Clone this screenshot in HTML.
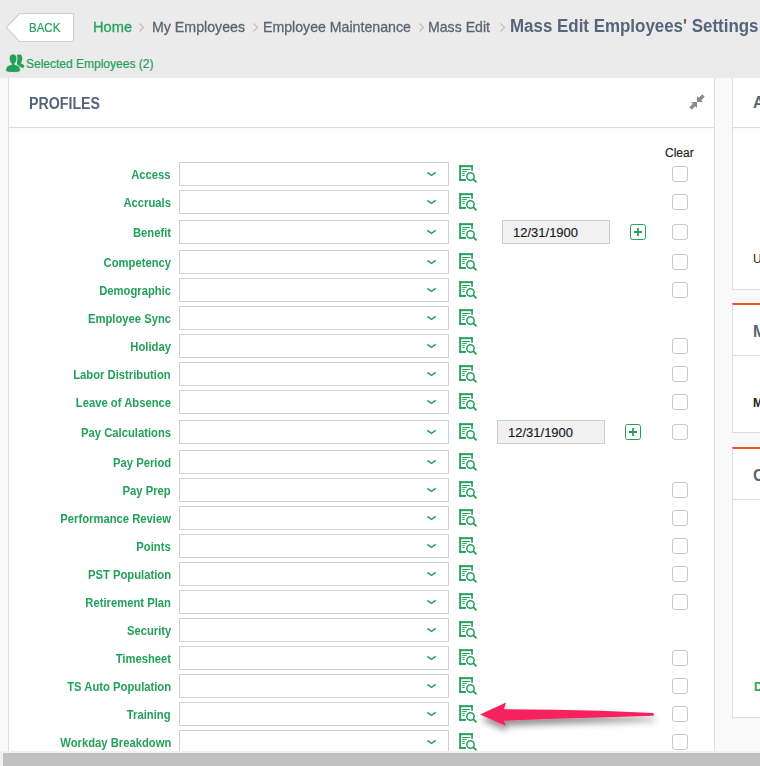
<!DOCTYPE html><html><head><meta charset="utf-8"><style>
*{box-sizing:border-box;margin:0;padding:0}
html,body{width:760px;height:766px;overflow:hidden;background:#f9f9f9;font-family:"Liberation Sans",sans-serif;position:relative}
.a{position:absolute}
#hdr{left:0;top:0;width:760px;height:78px;background:#ebebeb}
.bc{font-size:15px;color:#5b6470;white-space:nowrap;top:18px;-webkit-text-stroke:0.3px currentColor;transform-origin:0 0}
.sep{font-size:13px;color:#aaa}
.lbl{font-size:13px;font-weight:bold;color:#23a15a;white-space:nowrap;transform-origin:100% 0;text-align:right}
.sel{left:179px;width:270px;height:24px;border:1px solid #cfcfcf;background:#fff}
.ic{left:459px;width:19px;height:19px}
.cb{left:672px;width:16px;height:16px;border:1px solid #c8c8c8;border-radius:3px;background:#fff}
.dt{width:108px;height:24px;border:1px solid #cdcdcd;background:#f1f1f1;font-size:13px;color:#1a1a1a;-webkit-text-stroke:0.15px currentColor;padding-left:10px;line-height:24px}
.pl{width:16px;height:16px;border:1px solid #23a15a;border-radius:2px;background:#fff}
</style></head><body><div id="hdr" class="a"></div>
<svg class="a" style="left:0;top:0" width="80" height="50"><path d="M19.5 13.5 L73.5 13.5 L73.5 41.5 L19.5 41.5 L6.3 27.5 Z" fill="#fff" stroke="#d0d0d0" stroke-width="1.1"/></svg>
<div class="a" style="left:29px;top:21px;font-size:12.5px;-webkit-text-stroke:0.2px currentColor;color:#23a15a;white-space:nowrap;transform:scaleX(0.92);transform-origin:0 0">BACK</div>
<div class="a bc" style="left:93px;color:#23a15a;transform:scaleX(0.978)">Home</div>
<div class="a bc" style="left:152px;transform:scaleX(0.946)">My Employees</div>
<div class="a bc" style="left:263px;transform:scaleX(0.943)">Employee Maintenance</div>
<div class="a bc" style="left:428px;transform:scaleX(0.941)">Mass Edit</div>
<svg class="a" style="left:138px;top:22px" width="8" height="12"><path d="M1.5 1.5 L5.5 5.5 L1.5 9.5" fill="none" stroke="#bdbdbd" stroke-width="1.2"/></svg>
<svg class="a" style="left:252px;top:22px" width="8" height="12"><path d="M1.5 1.5 L5.5 5.5 L1.5 9.5" fill="none" stroke="#bdbdbd" stroke-width="1.2"/></svg>
<svg class="a" style="left:418px;top:22px" width="8" height="12"><path d="M1.5 1.5 L5.5 5.5 L1.5 9.5" fill="none" stroke="#bdbdbd" stroke-width="1.2"/></svg>
<svg class="a" style="left:499px;top:22px" width="8" height="12"><path d="M1.5 1.5 L5.5 5.5 L1.5 9.5" fill="none" stroke="#bdbdbd" stroke-width="1.2"/></svg>
<div class="a" style="left:510px;top:16px;font-size:18px;font-weight:bold;color:#56657a;white-space:nowrap;transform:scaleX(0.94);transform-origin:0 0">Mass Edit Employees' Settings</div>
<svg class="a" style="left:0;top:50px" width="30" height="26" viewBox="0 50 30 26"><g fill="#23a15a"><path d="M19.8 54.6 C21.4 54.6 22.3 56 22.3 58.3 C22.3 60.6 21.5 62.3 20.8 63.2 C23 64.2 24.5 65.3 24.4 66.6 C24.3 67.7 23.4 68 22.3 67.8 L17 66 L17 55 C17.8 54.7 18.7 54.6 19.8 54.6 Z"/></g><g fill="#23a15a" stroke="#ebebeb" stroke-width="1"><path d="M13.1 53.9 C15.5 53.9 17 55.6 17 58.3 C17 60.8 15.9 62.6 14.7 63.7 L14.7 64.5 C18.2 64.9 20.5 66.8 20.4 70.2 C20.3 72.2 17.5 72.5 13 72.5 C8.5 72.5 5.8 72.2 5.7 70.2 C5.6 66.8 8 64.9 11.5 64.5 L11.5 63.7 C10.3 62.6 9.2 60.8 9.2 58.3 C9.2 55.6 10.7 53.9 13.1 53.9 Z"/></g></svg>
<div class="a" style="left:26px;top:57px;font-size:12px;-webkit-text-stroke:0.2px currentColor;color:#23a15a;white-space:nowrap;transform:scaleX(1.0);transform-origin:0 0">Selected Employees (2)</div>
<div class="a" style="left:8px;top:78px;width:707px;height:673px;background:#fff;border-left:1px solid #dedede;border-right:1px solid #dedede"></div>
<div class="a" style="left:9px;top:127px;width:705px;height:1px;background:#dcdcdc;box-shadow:0 2px 3px rgba(0,0,0,0.07)"></div>
<div class="a" style="left:29px;top:95px;font-size:16px;font-weight:bold;color:#56657a;white-space:nowrap;transform:scaleX(0.888);transform-origin:0 0">PROFILES</div>
<svg class="a" style="left:680px;top:85px" width="34" height="34" viewBox="680 85 34 34"><g fill="#8c8c8c"><path d="M697 96 L698.8 97.8 L702.3 94.3 L704.7 96.7 L701.2 100.2 L703 102 L697 102 Z"/><path d="M697 108 L695.2 106.2 L691.7 109.7 L689.3 107.3 L692.8 103.8 L691 102 L697 102 Z"/></g></svg>
<div class="a" style="left:665px;top:146px;font-size:12px;color:#222;-webkit-text-stroke:0.15px currentColor;white-space:nowrap;transform:scaleX(1.0);transform-origin:0 0">Clear</div>
<div class="a lbl" style="right:589px;top:167px;transform:scaleX(0.865)">Access</div>
<div class="a sel" style="top:162px"></div>
<svg class="a" style="left:426px;top:171px" width="11" height="7"><path d="M1.3 1.3 L5.5 4.3 L9.7 1.3" fill="none" stroke="#23a15a" stroke-width="1.45"/></svg>
<div class="a ic" style="top:165px"><svg viewBox="0 0 19 19" width="19" height="19"><g fill="#23a15a"><rect x="0.2" y="0.2" width="1.9" height="15.7"/><rect x="0.2" y="0.2" width="13.7" height="2"/><rect x="12.2" y="0.2" width="1.7" height="5.6"/><rect x="0.2" y="14" width="6.8" height="1.9"/><rect x="3.2" y="4" width="7.7" height="1"/><rect x="3.2" y="5.9" width="4.5" height="1"/><rect x="3.2" y="7.9" width="2.6" height="1"/><rect x="3.2" y="9.9" width="2.6" height="1"/></g><circle cx="11.5" cy="11.5" r="3.7" fill="none" stroke="#23a15a" stroke-width="1.5"/><path d="M14.2 14.2 L17.5 17.4" stroke="#23a15a" stroke-width="1.8"/></svg></div>
<div class="a cb" style="top:166px"></div>
<div class="a lbl" style="right:589px;top:195px;transform:scaleX(0.865)">Accruals</div>
<div class="a sel" style="top:190px"></div>
<svg class="a" style="left:426px;top:199px" width="11" height="7"><path d="M1.3 1.3 L5.5 4.3 L9.7 1.3" fill="none" stroke="#23a15a" stroke-width="1.45"/></svg>
<div class="a ic" style="top:193px"><svg viewBox="0 0 19 19" width="19" height="19"><g fill="#23a15a"><rect x="0.2" y="0.2" width="1.9" height="15.7"/><rect x="0.2" y="0.2" width="13.7" height="2"/><rect x="12.2" y="0.2" width="1.7" height="5.6"/><rect x="0.2" y="14" width="6.8" height="1.9"/><rect x="3.2" y="4" width="7.7" height="1"/><rect x="3.2" y="5.9" width="4.5" height="1"/><rect x="3.2" y="7.9" width="2.6" height="1"/><rect x="3.2" y="9.9" width="2.6" height="1"/></g><circle cx="11.5" cy="11.5" r="3.7" fill="none" stroke="#23a15a" stroke-width="1.5"/><path d="M14.2 14.2 L17.5 17.4" stroke="#23a15a" stroke-width="1.8"/></svg></div>
<div class="a cb" style="top:194px"></div>
<div class="a lbl" style="right:589px;top:225px;transform:scaleX(0.865)">Benefit</div>
<div class="a sel" style="top:220px"></div>
<svg class="a" style="left:426px;top:229px" width="11" height="7"><path d="M1.3 1.3 L5.5 4.3 L9.7 1.3" fill="none" stroke="#23a15a" stroke-width="1.45"/></svg>
<div class="a ic" style="top:223px"><svg viewBox="0 0 19 19" width="19" height="19"><g fill="#23a15a"><rect x="0.2" y="0.2" width="1.9" height="15.7"/><rect x="0.2" y="0.2" width="13.7" height="2"/><rect x="12.2" y="0.2" width="1.7" height="5.6"/><rect x="0.2" y="14" width="6.8" height="1.9"/><rect x="3.2" y="4" width="7.7" height="1"/><rect x="3.2" y="5.9" width="4.5" height="1"/><rect x="3.2" y="7.9" width="2.6" height="1"/><rect x="3.2" y="9.9" width="2.6" height="1"/></g><circle cx="11.5" cy="11.5" r="3.7" fill="none" stroke="#23a15a" stroke-width="1.5"/><path d="M14.2 14.2 L17.5 17.4" stroke="#23a15a" stroke-width="1.8"/></svg></div>
<div class="a cb" style="top:224px"></div>
<div class="a dt" style="left:502px;top:220px">12/31/1900</div>
<svg class="a" style="left:630px;top:224px" width="16" height="16"><rect x="0.5" y="0.5" width="15" height="15" rx="2" fill="#fff" stroke="#23a15a"/><path d="M8 4 V12 M4 8 H12" stroke="#23a15a" stroke-width="1.8"/></svg>
<div class="a lbl" style="right:589px;top:255px;transform:scaleX(0.865)">Competency</div>
<div class="a sel" style="top:250px"></div>
<svg class="a" style="left:426px;top:259px" width="11" height="7"><path d="M1.3 1.3 L5.5 4.3 L9.7 1.3" fill="none" stroke="#23a15a" stroke-width="1.45"/></svg>
<div class="a ic" style="top:253px"><svg viewBox="0 0 19 19" width="19" height="19"><g fill="#23a15a"><rect x="0.2" y="0.2" width="1.9" height="15.7"/><rect x="0.2" y="0.2" width="13.7" height="2"/><rect x="12.2" y="0.2" width="1.7" height="5.6"/><rect x="0.2" y="14" width="6.8" height="1.9"/><rect x="3.2" y="4" width="7.7" height="1"/><rect x="3.2" y="5.9" width="4.5" height="1"/><rect x="3.2" y="7.9" width="2.6" height="1"/><rect x="3.2" y="9.9" width="2.6" height="1"/></g><circle cx="11.5" cy="11.5" r="3.7" fill="none" stroke="#23a15a" stroke-width="1.5"/><path d="M14.2 14.2 L17.5 17.4" stroke="#23a15a" stroke-width="1.8"/></svg></div>
<div class="a cb" style="top:254px"></div>
<div class="a lbl" style="right:589px;top:283px;transform:scaleX(0.865)">Demographic</div>
<div class="a sel" style="top:278px"></div>
<svg class="a" style="left:426px;top:287px" width="11" height="7"><path d="M1.3 1.3 L5.5 4.3 L9.7 1.3" fill="none" stroke="#23a15a" stroke-width="1.45"/></svg>
<div class="a ic" style="top:281px"><svg viewBox="0 0 19 19" width="19" height="19"><g fill="#23a15a"><rect x="0.2" y="0.2" width="1.9" height="15.7"/><rect x="0.2" y="0.2" width="13.7" height="2"/><rect x="12.2" y="0.2" width="1.7" height="5.6"/><rect x="0.2" y="14" width="6.8" height="1.9"/><rect x="3.2" y="4" width="7.7" height="1"/><rect x="3.2" y="5.9" width="4.5" height="1"/><rect x="3.2" y="7.9" width="2.6" height="1"/><rect x="3.2" y="9.9" width="2.6" height="1"/></g><circle cx="11.5" cy="11.5" r="3.7" fill="none" stroke="#23a15a" stroke-width="1.5"/><path d="M14.2 14.2 L17.5 17.4" stroke="#23a15a" stroke-width="1.8"/></svg></div>
<div class="a cb" style="top:282px"></div>
<div class="a lbl" style="right:589px;top:311px;transform:scaleX(0.865)">Employee Sync</div>
<div class="a sel" style="top:306px"></div>
<svg class="a" style="left:426px;top:315px" width="11" height="7"><path d="M1.3 1.3 L5.5 4.3 L9.7 1.3" fill="none" stroke="#23a15a" stroke-width="1.45"/></svg>
<div class="a ic" style="top:309px"><svg viewBox="0 0 19 19" width="19" height="19"><g fill="#23a15a"><rect x="0.2" y="0.2" width="1.9" height="15.7"/><rect x="0.2" y="0.2" width="13.7" height="2"/><rect x="12.2" y="0.2" width="1.7" height="5.6"/><rect x="0.2" y="14" width="6.8" height="1.9"/><rect x="3.2" y="4" width="7.7" height="1"/><rect x="3.2" y="5.9" width="4.5" height="1"/><rect x="3.2" y="7.9" width="2.6" height="1"/><rect x="3.2" y="9.9" width="2.6" height="1"/></g><circle cx="11.5" cy="11.5" r="3.7" fill="none" stroke="#23a15a" stroke-width="1.5"/><path d="M14.2 14.2 L17.5 17.4" stroke="#23a15a" stroke-width="1.8"/></svg></div>
<div class="a lbl" style="right:589px;top:339px;transform:scaleX(0.865)">Holiday</div>
<div class="a sel" style="top:334px"></div>
<svg class="a" style="left:426px;top:343px" width="11" height="7"><path d="M1.3 1.3 L5.5 4.3 L9.7 1.3" fill="none" stroke="#23a15a" stroke-width="1.45"/></svg>
<div class="a ic" style="top:337px"><svg viewBox="0 0 19 19" width="19" height="19"><g fill="#23a15a"><rect x="0.2" y="0.2" width="1.9" height="15.7"/><rect x="0.2" y="0.2" width="13.7" height="2"/><rect x="12.2" y="0.2" width="1.7" height="5.6"/><rect x="0.2" y="14" width="6.8" height="1.9"/><rect x="3.2" y="4" width="7.7" height="1"/><rect x="3.2" y="5.9" width="4.5" height="1"/><rect x="3.2" y="7.9" width="2.6" height="1"/><rect x="3.2" y="9.9" width="2.6" height="1"/></g><circle cx="11.5" cy="11.5" r="3.7" fill="none" stroke="#23a15a" stroke-width="1.5"/><path d="M14.2 14.2 L17.5 17.4" stroke="#23a15a" stroke-width="1.8"/></svg></div>
<div class="a cb" style="top:338px"></div>
<div class="a lbl" style="right:589px;top:367px;transform:scaleX(0.865)">Labor Distribution</div>
<div class="a sel" style="top:362px"></div>
<svg class="a" style="left:426px;top:371px" width="11" height="7"><path d="M1.3 1.3 L5.5 4.3 L9.7 1.3" fill="none" stroke="#23a15a" stroke-width="1.45"/></svg>
<div class="a ic" style="top:365px"><svg viewBox="0 0 19 19" width="19" height="19"><g fill="#23a15a"><rect x="0.2" y="0.2" width="1.9" height="15.7"/><rect x="0.2" y="0.2" width="13.7" height="2"/><rect x="12.2" y="0.2" width="1.7" height="5.6"/><rect x="0.2" y="14" width="6.8" height="1.9"/><rect x="3.2" y="4" width="7.7" height="1"/><rect x="3.2" y="5.9" width="4.5" height="1"/><rect x="3.2" y="7.9" width="2.6" height="1"/><rect x="3.2" y="9.9" width="2.6" height="1"/></g><circle cx="11.5" cy="11.5" r="3.7" fill="none" stroke="#23a15a" stroke-width="1.5"/><path d="M14.2 14.2 L17.5 17.4" stroke="#23a15a" stroke-width="1.8"/></svg></div>
<div class="a cb" style="top:366px"></div>
<div class="a lbl" style="right:589px;top:395px;transform:scaleX(0.865)">Leave of Absence</div>
<div class="a sel" style="top:390px"></div>
<svg class="a" style="left:426px;top:399px" width="11" height="7"><path d="M1.3 1.3 L5.5 4.3 L9.7 1.3" fill="none" stroke="#23a15a" stroke-width="1.45"/></svg>
<div class="a ic" style="top:393px"><svg viewBox="0 0 19 19" width="19" height="19"><g fill="#23a15a"><rect x="0.2" y="0.2" width="1.9" height="15.7"/><rect x="0.2" y="0.2" width="13.7" height="2"/><rect x="12.2" y="0.2" width="1.7" height="5.6"/><rect x="0.2" y="14" width="6.8" height="1.9"/><rect x="3.2" y="4" width="7.7" height="1"/><rect x="3.2" y="5.9" width="4.5" height="1"/><rect x="3.2" y="7.9" width="2.6" height="1"/><rect x="3.2" y="9.9" width="2.6" height="1"/></g><circle cx="11.5" cy="11.5" r="3.7" fill="none" stroke="#23a15a" stroke-width="1.5"/><path d="M14.2 14.2 L17.5 17.4" stroke="#23a15a" stroke-width="1.8"/></svg></div>
<div class="a cb" style="top:394px"></div>
<div class="a lbl" style="right:589px;top:425px;transform:scaleX(0.865)">Pay Calculations</div>
<div class="a sel" style="top:420px"></div>
<svg class="a" style="left:426px;top:429px" width="11" height="7"><path d="M1.3 1.3 L5.5 4.3 L9.7 1.3" fill="none" stroke="#23a15a" stroke-width="1.45"/></svg>
<div class="a ic" style="top:423px"><svg viewBox="0 0 19 19" width="19" height="19"><g fill="#23a15a"><rect x="0.2" y="0.2" width="1.9" height="15.7"/><rect x="0.2" y="0.2" width="13.7" height="2"/><rect x="12.2" y="0.2" width="1.7" height="5.6"/><rect x="0.2" y="14" width="6.8" height="1.9"/><rect x="3.2" y="4" width="7.7" height="1"/><rect x="3.2" y="5.9" width="4.5" height="1"/><rect x="3.2" y="7.9" width="2.6" height="1"/><rect x="3.2" y="9.9" width="2.6" height="1"/></g><circle cx="11.5" cy="11.5" r="3.7" fill="none" stroke="#23a15a" stroke-width="1.5"/><path d="M14.2 14.2 L17.5 17.4" stroke="#23a15a" stroke-width="1.8"/></svg></div>
<div class="a cb" style="top:424px"></div>
<div class="a dt" style="left:497px;top:420px">12/31/1900</div>
<svg class="a" style="left:625px;top:424px" width="16" height="16"><rect x="0.5" y="0.5" width="15" height="15" rx="2" fill="#fff" stroke="#23a15a"/><path d="M8 4 V12 M4 8 H12" stroke="#23a15a" stroke-width="1.8"/></svg>
<div class="a lbl" style="right:589px;top:455px;transform:scaleX(0.865)">Pay Period</div>
<div class="a sel" style="top:450px"></div>
<svg class="a" style="left:426px;top:459px" width="11" height="7"><path d="M1.3 1.3 L5.5 4.3 L9.7 1.3" fill="none" stroke="#23a15a" stroke-width="1.45"/></svg>
<div class="a ic" style="top:453px"><svg viewBox="0 0 19 19" width="19" height="19"><g fill="#23a15a"><rect x="0.2" y="0.2" width="1.9" height="15.7"/><rect x="0.2" y="0.2" width="13.7" height="2"/><rect x="12.2" y="0.2" width="1.7" height="5.6"/><rect x="0.2" y="14" width="6.8" height="1.9"/><rect x="3.2" y="4" width="7.7" height="1"/><rect x="3.2" y="5.9" width="4.5" height="1"/><rect x="3.2" y="7.9" width="2.6" height="1"/><rect x="3.2" y="9.9" width="2.6" height="1"/></g><circle cx="11.5" cy="11.5" r="3.7" fill="none" stroke="#23a15a" stroke-width="1.5"/><path d="M14.2 14.2 L17.5 17.4" stroke="#23a15a" stroke-width="1.8"/></svg></div>
<div class="a lbl" style="right:589px;top:483px;transform:scaleX(0.865)">Pay Prep</div>
<div class="a sel" style="top:478px"></div>
<svg class="a" style="left:426px;top:487px" width="11" height="7"><path d="M1.3 1.3 L5.5 4.3 L9.7 1.3" fill="none" stroke="#23a15a" stroke-width="1.45"/></svg>
<div class="a ic" style="top:481px"><svg viewBox="0 0 19 19" width="19" height="19"><g fill="#23a15a"><rect x="0.2" y="0.2" width="1.9" height="15.7"/><rect x="0.2" y="0.2" width="13.7" height="2"/><rect x="12.2" y="0.2" width="1.7" height="5.6"/><rect x="0.2" y="14" width="6.8" height="1.9"/><rect x="3.2" y="4" width="7.7" height="1"/><rect x="3.2" y="5.9" width="4.5" height="1"/><rect x="3.2" y="7.9" width="2.6" height="1"/><rect x="3.2" y="9.9" width="2.6" height="1"/></g><circle cx="11.5" cy="11.5" r="3.7" fill="none" stroke="#23a15a" stroke-width="1.5"/><path d="M14.2 14.2 L17.5 17.4" stroke="#23a15a" stroke-width="1.8"/></svg></div>
<div class="a cb" style="top:482px"></div>
<div class="a lbl" style="right:589px;top:511px;transform:scaleX(0.865)">Performance Review</div>
<div class="a sel" style="top:506px"></div>
<svg class="a" style="left:426px;top:515px" width="11" height="7"><path d="M1.3 1.3 L5.5 4.3 L9.7 1.3" fill="none" stroke="#23a15a" stroke-width="1.45"/></svg>
<div class="a ic" style="top:509px"><svg viewBox="0 0 19 19" width="19" height="19"><g fill="#23a15a"><rect x="0.2" y="0.2" width="1.9" height="15.7"/><rect x="0.2" y="0.2" width="13.7" height="2"/><rect x="12.2" y="0.2" width="1.7" height="5.6"/><rect x="0.2" y="14" width="6.8" height="1.9"/><rect x="3.2" y="4" width="7.7" height="1"/><rect x="3.2" y="5.9" width="4.5" height="1"/><rect x="3.2" y="7.9" width="2.6" height="1"/><rect x="3.2" y="9.9" width="2.6" height="1"/></g><circle cx="11.5" cy="11.5" r="3.7" fill="none" stroke="#23a15a" stroke-width="1.5"/><path d="M14.2 14.2 L17.5 17.4" stroke="#23a15a" stroke-width="1.8"/></svg></div>
<div class="a cb" style="top:510px"></div>
<div class="a lbl" style="right:589px;top:539px;transform:scaleX(0.865)">Points</div>
<div class="a sel" style="top:534px"></div>
<svg class="a" style="left:426px;top:543px" width="11" height="7"><path d="M1.3 1.3 L5.5 4.3 L9.7 1.3" fill="none" stroke="#23a15a" stroke-width="1.45"/></svg>
<div class="a ic" style="top:537px"><svg viewBox="0 0 19 19" width="19" height="19"><g fill="#23a15a"><rect x="0.2" y="0.2" width="1.9" height="15.7"/><rect x="0.2" y="0.2" width="13.7" height="2"/><rect x="12.2" y="0.2" width="1.7" height="5.6"/><rect x="0.2" y="14" width="6.8" height="1.9"/><rect x="3.2" y="4" width="7.7" height="1"/><rect x="3.2" y="5.9" width="4.5" height="1"/><rect x="3.2" y="7.9" width="2.6" height="1"/><rect x="3.2" y="9.9" width="2.6" height="1"/></g><circle cx="11.5" cy="11.5" r="3.7" fill="none" stroke="#23a15a" stroke-width="1.5"/><path d="M14.2 14.2 L17.5 17.4" stroke="#23a15a" stroke-width="1.8"/></svg></div>
<div class="a cb" style="top:538px"></div>
<div class="a lbl" style="right:589px;top:567px;transform:scaleX(0.865)">PST Population</div>
<div class="a sel" style="top:562px"></div>
<svg class="a" style="left:426px;top:571px" width="11" height="7"><path d="M1.3 1.3 L5.5 4.3 L9.7 1.3" fill="none" stroke="#23a15a" stroke-width="1.45"/></svg>
<div class="a ic" style="top:565px"><svg viewBox="0 0 19 19" width="19" height="19"><g fill="#23a15a"><rect x="0.2" y="0.2" width="1.9" height="15.7"/><rect x="0.2" y="0.2" width="13.7" height="2"/><rect x="12.2" y="0.2" width="1.7" height="5.6"/><rect x="0.2" y="14" width="6.8" height="1.9"/><rect x="3.2" y="4" width="7.7" height="1"/><rect x="3.2" y="5.9" width="4.5" height="1"/><rect x="3.2" y="7.9" width="2.6" height="1"/><rect x="3.2" y="9.9" width="2.6" height="1"/></g><circle cx="11.5" cy="11.5" r="3.7" fill="none" stroke="#23a15a" stroke-width="1.5"/><path d="M14.2 14.2 L17.5 17.4" stroke="#23a15a" stroke-width="1.8"/></svg></div>
<div class="a cb" style="top:566px"></div>
<div class="a lbl" style="right:589px;top:595px;transform:scaleX(0.865)">Retirement Plan</div>
<div class="a sel" style="top:590px"></div>
<svg class="a" style="left:426px;top:599px" width="11" height="7"><path d="M1.3 1.3 L5.5 4.3 L9.7 1.3" fill="none" stroke="#23a15a" stroke-width="1.45"/></svg>
<div class="a ic" style="top:593px"><svg viewBox="0 0 19 19" width="19" height="19"><g fill="#23a15a"><rect x="0.2" y="0.2" width="1.9" height="15.7"/><rect x="0.2" y="0.2" width="13.7" height="2"/><rect x="12.2" y="0.2" width="1.7" height="5.6"/><rect x="0.2" y="14" width="6.8" height="1.9"/><rect x="3.2" y="4" width="7.7" height="1"/><rect x="3.2" y="5.9" width="4.5" height="1"/><rect x="3.2" y="7.9" width="2.6" height="1"/><rect x="3.2" y="9.9" width="2.6" height="1"/></g><circle cx="11.5" cy="11.5" r="3.7" fill="none" stroke="#23a15a" stroke-width="1.5"/><path d="M14.2 14.2 L17.5 17.4" stroke="#23a15a" stroke-width="1.8"/></svg></div>
<div class="a cb" style="top:594px"></div>
<div class="a lbl" style="right:589px;top:623px;transform:scaleX(0.865)">Security</div>
<div class="a sel" style="top:618px"></div>
<svg class="a" style="left:426px;top:627px" width="11" height="7"><path d="M1.3 1.3 L5.5 4.3 L9.7 1.3" fill="none" stroke="#23a15a" stroke-width="1.45"/></svg>
<div class="a ic" style="top:621px"><svg viewBox="0 0 19 19" width="19" height="19"><g fill="#23a15a"><rect x="0.2" y="0.2" width="1.9" height="15.7"/><rect x="0.2" y="0.2" width="13.7" height="2"/><rect x="12.2" y="0.2" width="1.7" height="5.6"/><rect x="0.2" y="14" width="6.8" height="1.9"/><rect x="3.2" y="4" width="7.7" height="1"/><rect x="3.2" y="5.9" width="4.5" height="1"/><rect x="3.2" y="7.9" width="2.6" height="1"/><rect x="3.2" y="9.9" width="2.6" height="1"/></g><circle cx="11.5" cy="11.5" r="3.7" fill="none" stroke="#23a15a" stroke-width="1.5"/><path d="M14.2 14.2 L17.5 17.4" stroke="#23a15a" stroke-width="1.8"/></svg></div>
<div class="a lbl" style="right:589px;top:651px;transform:scaleX(0.865)">Timesheet</div>
<div class="a sel" style="top:646px"></div>
<svg class="a" style="left:426px;top:655px" width="11" height="7"><path d="M1.3 1.3 L5.5 4.3 L9.7 1.3" fill="none" stroke="#23a15a" stroke-width="1.45"/></svg>
<div class="a ic" style="top:649px"><svg viewBox="0 0 19 19" width="19" height="19"><g fill="#23a15a"><rect x="0.2" y="0.2" width="1.9" height="15.7"/><rect x="0.2" y="0.2" width="13.7" height="2"/><rect x="12.2" y="0.2" width="1.7" height="5.6"/><rect x="0.2" y="14" width="6.8" height="1.9"/><rect x="3.2" y="4" width="7.7" height="1"/><rect x="3.2" y="5.9" width="4.5" height="1"/><rect x="3.2" y="7.9" width="2.6" height="1"/><rect x="3.2" y="9.9" width="2.6" height="1"/></g><circle cx="11.5" cy="11.5" r="3.7" fill="none" stroke="#23a15a" stroke-width="1.5"/><path d="M14.2 14.2 L17.5 17.4" stroke="#23a15a" stroke-width="1.8"/></svg></div>
<div class="a cb" style="top:650px"></div>
<div class="a lbl" style="right:589px;top:679px;transform:scaleX(0.865)">TS Auto Population</div>
<div class="a sel" style="top:674px"></div>
<svg class="a" style="left:426px;top:683px" width="11" height="7"><path d="M1.3 1.3 L5.5 4.3 L9.7 1.3" fill="none" stroke="#23a15a" stroke-width="1.45"/></svg>
<div class="a ic" style="top:677px"><svg viewBox="0 0 19 19" width="19" height="19"><g fill="#23a15a"><rect x="0.2" y="0.2" width="1.9" height="15.7"/><rect x="0.2" y="0.2" width="13.7" height="2"/><rect x="12.2" y="0.2" width="1.7" height="5.6"/><rect x="0.2" y="14" width="6.8" height="1.9"/><rect x="3.2" y="4" width="7.7" height="1"/><rect x="3.2" y="5.9" width="4.5" height="1"/><rect x="3.2" y="7.9" width="2.6" height="1"/><rect x="3.2" y="9.9" width="2.6" height="1"/></g><circle cx="11.5" cy="11.5" r="3.7" fill="none" stroke="#23a15a" stroke-width="1.5"/><path d="M14.2 14.2 L17.5 17.4" stroke="#23a15a" stroke-width="1.8"/></svg></div>
<div class="a cb" style="top:678px"></div>
<div class="a lbl" style="right:589px;top:707px;transform:scaleX(0.865)">Training</div>
<div class="a sel" style="top:702px"></div>
<svg class="a" style="left:426px;top:711px" width="11" height="7"><path d="M1.3 1.3 L5.5 4.3 L9.7 1.3" fill="none" stroke="#23a15a" stroke-width="1.45"/></svg>
<div class="a ic" style="top:705px"><svg viewBox="0 0 19 19" width="19" height="19"><g fill="#23a15a"><rect x="0.2" y="0.2" width="1.9" height="15.7"/><rect x="0.2" y="0.2" width="13.7" height="2"/><rect x="12.2" y="0.2" width="1.7" height="5.6"/><rect x="0.2" y="14" width="6.8" height="1.9"/><rect x="3.2" y="4" width="7.7" height="1"/><rect x="3.2" y="5.9" width="4.5" height="1"/><rect x="3.2" y="7.9" width="2.6" height="1"/><rect x="3.2" y="9.9" width="2.6" height="1"/></g><circle cx="11.5" cy="11.5" r="3.7" fill="none" stroke="#23a15a" stroke-width="1.5"/><path d="M14.2 14.2 L17.5 17.4" stroke="#23a15a" stroke-width="1.8"/></svg></div>
<div class="a cb" style="top:706px"></div>
<div class="a lbl" style="right:589px;top:735px;transform:scaleX(0.865)">Workday Breakdown</div>
<div class="a sel" style="top:730px"></div>
<svg class="a" style="left:426px;top:739px" width="11" height="7"><path d="M1.3 1.3 L5.5 4.3 L9.7 1.3" fill="none" stroke="#23a15a" stroke-width="1.45"/></svg>
<div class="a ic" style="top:733px"><svg viewBox="0 0 19 19" width="19" height="19"><g fill="#23a15a"><rect x="0.2" y="0.2" width="1.9" height="15.7"/><rect x="0.2" y="0.2" width="13.7" height="2"/><rect x="12.2" y="0.2" width="1.7" height="5.6"/><rect x="0.2" y="14" width="6.8" height="1.9"/><rect x="3.2" y="4" width="7.7" height="1"/><rect x="3.2" y="5.9" width="4.5" height="1"/><rect x="3.2" y="7.9" width="2.6" height="1"/><rect x="3.2" y="9.9" width="2.6" height="1"/></g><circle cx="11.5" cy="11.5" r="3.7" fill="none" stroke="#23a15a" stroke-width="1.5"/><path d="M14.2 14.2 L17.5 17.4" stroke="#23a15a" stroke-width="1.8"/></svg></div>
<div class="a cb" style="top:734px"></div>
<div class="a" style="left:732px;top:78px;width:40px;height:212px;background:#fff;border:1px solid #dedede;border-top:none"></div>
<div class="a" style="left:733px;top:127px;width:30px;height:1px;background:#dcdcdc;box-shadow:0 2px 3px rgba(0,0,0,0.07)"></div>
<div class="a" style="left:753px;top:94px;font-size:16px;font-weight:bold;color:#56657a">A</div>
<div class="a" style="left:753px;top:252px;font-size:12px;color:#222">U</div>
<div class="a" style="left:732px;top:303px;width:40px;height:130px;background:#fff;border:1px solid #dedede;border-top:2px solid #f4511e"></div>
<div class="a" style="left:733px;top:355px;width:30px;height:1px;background:#dcdcdc;box-shadow:0 2px 3px rgba(0,0,0,0.07)"></div>
<div class="a" style="left:753px;top:323px;font-size:16px;font-weight:bold;color:#56657a">M</div>
<div class="a" style="left:753px;top:396px;font-size:12px;font-weight:bold;color:#222">M</div>
<div class="a" style="left:732px;top:447px;width:40px;height:271px;background:#fff;border:1px solid #dedede;border-top:2px solid #f4511e"></div>
<div class="a" style="left:733px;top:499px;width:30px;height:1px;background:#dcdcdc;box-shadow:0 2px 3px rgba(0,0,0,0.07)"></div>
<div class="a" style="left:753px;top:467px;font-size:16px;font-weight:bold;color:#56657a">C</div>
<div class="a" style="left:754px;top:680px;font-size:12px;font-weight:bold;color:#23a15a">D</div>
<svg class="a" style="left:470px;top:690px" width="200" height="50" viewBox="470 690 200 50"><defs><filter id="sh" x="-20%" y="-50%" width="140%" height="250%"><feGaussianBlur in="SourceAlpha" stdDeviation="3.5"/><feOffset dx="1" dy="5"/><feComponentTransfer><feFuncA type="linear" slope="0.45"/></feComponentTransfer><feMerge><feMergeNode/><feMergeNode in="SourceGraphic"/></feMerge></filter></defs><path filter="url(#sh)" d="M480 714.5 L506 702.5 L504 709.2 L555 709.7 L600 710.8 L653 713 Q655 714.4 653 715.8 L600 717.6 L555 718.7 L504 720.8 L506 726 Z" fill="#f5235f"/></svg>
<div class="a" style="left:0;top:751px;width:760px;height:15px;background:#f0f0f0"></div>
<div class="a" style="left:3px;top:753px;width:757px;height:13px;background:#c1c1c1"></div></body></html>
